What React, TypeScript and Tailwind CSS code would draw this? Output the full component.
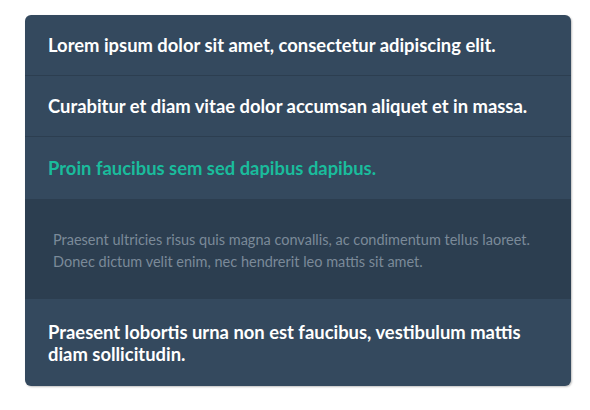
import React from "react";

export default function App() {
  const font = { fontFamily: "Lato, 'Noto Sans', sans-serif" };
  return (
    <div className="w-[590px] h-[410px] bg-white pt-[15px] pl-[25px]" style={font}>
      <div className="w-[546px] rounded-[6px] overflow-hidden bg-[#34495e] shadow-[1px_1px_2px_rgba(0,0,0,0.25)]">
        <div className="h-[61px] flex items-center px-[23px] border-b border-[#2c3e50] text-white font-bold text-[18.4px] leading-[22px]">
          Lorem ipsum dolor sit amet, consectetur adipiscing elit.
        </div>
        <div className="h-[61px] flex items-center px-[23px] border-b border-[#2c3e50] text-white font-bold text-[18.4px] leading-[22px]">
          Curabitur et diam vitae dolor accumsan aliquet et in massa.
        </div>
        <div className="h-[62px] flex items-center px-[23px] text-[#1abc9c] font-bold text-[18.4px] leading-[22px]">
          Proin faucibus sem sed dapibus dapibus.
        </div>
        <div className="h-[100px] bg-[#2c3e50] flex items-center px-[28px] pt-[3px] text-[#7b8a99] text-[14.5px] leading-[22px]">
          <p>
            Praesent ultricies risus quis magna convallis, ac condimentum tellus laoreet.
            <br />
            Donec dictum velit enim, nec hendrerit leo mattis sit amet.
          </p>
        </div>
        <div className="h-[87px] flex items-center px-[23px] text-white font-bold text-[18.4px] leading-[22px]">
          <p>
            Praesent lobortis urna non est faucibus, vestibulum mattis diam sollicitudin.
          </p>
        </div>
      </div>
    </div>
  );
}
